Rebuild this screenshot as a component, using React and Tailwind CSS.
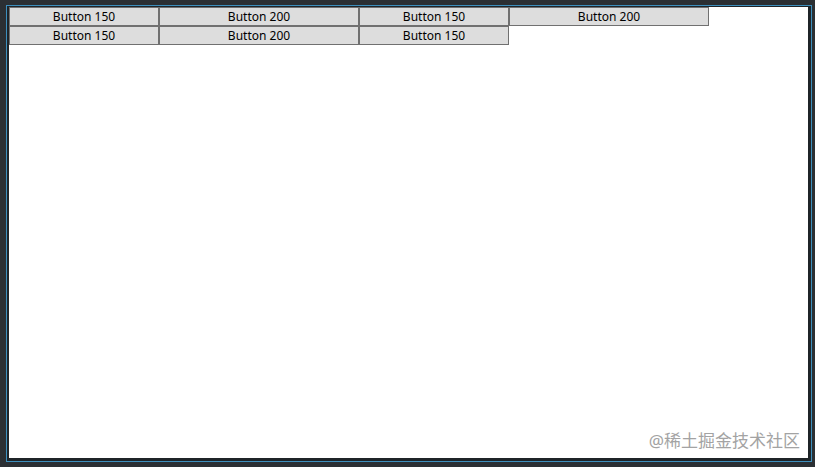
import React from "react";

const widths = [150, 200, 150, 200, 150, 200, 150];

const App = () => {
  return (
    <div className="w-[815px] h-[467px] bg-[#2b2f33] pt-[5px] pl-[6px] pr-[3px] pb-[5px]">
      <div className="w-full h-full border border-[#3d8fbd] bg-[#1f2428] pt-[1px] pl-[2px] pr-[3px] pb-[3px]">
        <div
          className="relative w-full h-full bg-white flex flex-wrap content-start"
          style={{ fontFamily: '"Noto Sans", "Open Sans", sans-serif' }}
        >
          {widths.map((w, i) => (
            <button
              key={i}
              className={`${
                w === 150 ? "w-[150px]" : "w-[200px]"
              } h-[19px] bg-[#dddddd] border border-[#707070] text-[12px] leading-[17px] text-black flex items-center justify-center`}
            >
              Button {w}
            </button>
          ))}
          <div
            className="absolute right-[8px] bottom-[5px] text-[17px] text-[#a3a3a3]"
            style={{ fontFamily: '"Noto Sans", "Noto Sans CJK SC", sans-serif' }}
          >
            @稀土掘金技术社区
          </div>
        </div>
      </div>
    </div>
  );
};

export default App;
